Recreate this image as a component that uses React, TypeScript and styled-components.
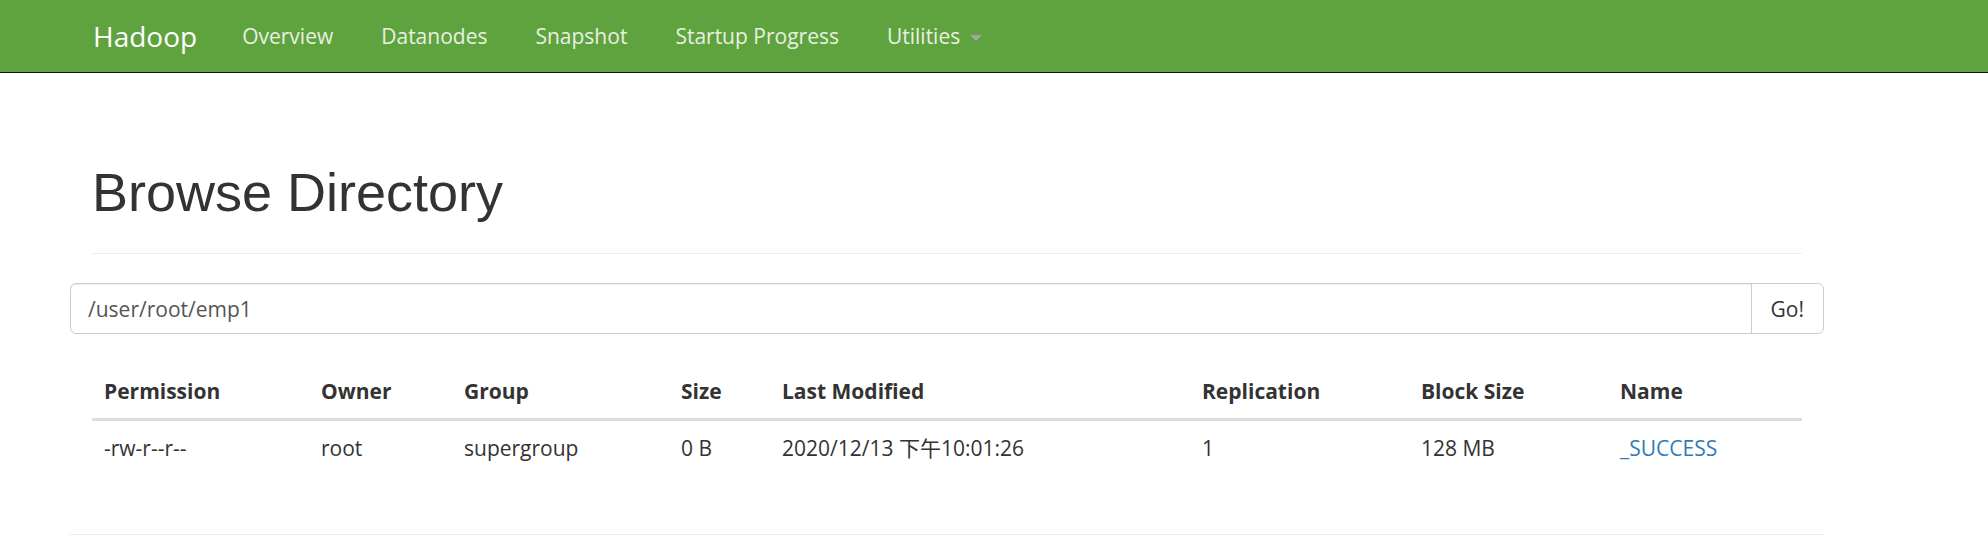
import styled, { createGlobalStyle } from 'styled-components';

const GlobalStyle = createGlobalStyle`
  html, body {
    margin: 0;
    padding: 0;
    background: #fff;
  }

  body {
    font-family: 'Open Sans', 'Noto Sans CJK SC', sans-serif;
    font-size: 21px;
    line-height: 30px;
    color: #333;
  }
`;

interface FileRow {
  permission: string;
  owner: string;
  group: string;
  size: string;
  modified: string;
  replication: string;
  blockSize: string;
  name: string;
}

const columns = [
  { label: 'Permission', width: 217 },
  { label: 'Owner', width: 143 },
  { label: 'Group', width: 217 },
  { label: 'Size', width: 101 },
  { label: 'Last Modified', width: 420 },
  { label: 'Replication', width: 219 },
  { label: 'Block Size', width: 199 },
  { label: 'Name', width: 194 },
];

const files: FileRow[] = [
  {
    permission: '-rw-r--r--',
    owner: 'root',
    group: 'supergroup',
    size: '0 B',
    modified: '2020/12/13 下午10:01:26',
    replication: '1',
    blockSize: '128 MB',
    name: '_SUCCESS',
  },
];

const navItems = ['Overview', 'Datanodes', 'Snapshot', 'Startup Progress'];

const App = () => {
  return (
    <>
      <GlobalStyle />
      <Navbar>
        <NavInner>
          <Brand>Hadoop</Brand>
          <NavList>
            {navItems.map((item) => (
              <NavLink key={item}>{item}</NavLink>
            ))}
            <NavLink>
              Utilities <Caret />
            </NavLink>
          </NavList>
        </NavInner>
      </Navbar>

      <Container>
        <PageHeader>
          <h1>Browse Directory</h1>
        </PageHeader>

        <Row>
          <InputGroup>
            <PathInput defaultValue="/user/root/emp1" />
            <GoButton>Go!</GoButton>
          </InputGroup>
        </Row>

        <Table>
          <colgroup>
            {columns.map((c) => (
              <Col key={c.label} $width={c.width} />
            ))}
          </colgroup>
          <thead>
            <tr>
              {columns.map((c) => (
                <Th key={c.label}>{c.label}</Th>
              ))}
            </tr>
          </thead>
          <tbody>
            {files.map((f) => (
              <tr key={f.name}>
                <Td>{f.permission}</Td>
                <Td>{f.owner}</Td>
                <Td>{f.group}</Td>
                <Td>{f.size}</Td>
                <Td>{f.modified}</Td>
                <Td>{f.replication}</Td>
                <Td>{f.blockSize}</Td>
                <Td>
                  <FileLink href="#">{f.name}</FileLink>
                </Td>
              </tr>
            ))}
          </tbody>
        </Table>
      </Container>

      <Footer>
        <FooterRule />
      </Footer>
    </>
  );
};

const Navbar = styled.nav`
  background-color: #5fa33e;
  border-bottom: 1px solid #111;
`;

const NavInner = styled.div`
  width: 1710px;
  margin-left: 70px;
  padding: 0 22px;
  height: 72px;
  display: flex;
  align-items: center;
`;

const Brand = styled.a`
  font-size: 28px;
  color: #fff;
  margin-left: 1px;
  padding-right: 21px;
`;

const NavList = styled.div`
  display: flex;
  align-items: center;
`;

const NavLink = styled.a`
  display: flex;
  align-items: center;
  padding: 0 24px;
  color: #e8f0e2;
  font-size: 21px;
`;

const Caret = styled.span`
  display: inline-block;
  width: 0;
  height: 0;
  margin-left: 10px;
  margin-top: 3px;
  border-top: 6px solid #a3a3a3;
  border-left: 6px solid transparent;
  border-right: 6px solid transparent;
`;

const Container = styled.div`
  width: 1710px;
  margin-left: 70px;
  padding: 0 22px;
`;

const PageHeader = styled.div`
  margin-top: 90px;
  padding-bottom: 31px;
  border-bottom: 1px solid #eee;

  h1 {
    margin: 0;
    font-family: 'Liberation Sans', Arial, sans-serif;
    font-size: 54px;
    font-weight: 400;
    line-height: 59px;
    color: #333;
  }
`;

const Row = styled.div`
  margin: 29px -22px 0;
`;

const InputGroup = styled.div`
  display: flex;
`;

const PathInput = styled.input`
  flex: 1;
  box-sizing: border-box;
  height: 51px;
  padding: 9px 17px;
  font-family: 'Open Sans', sans-serif;
  font-size: 21px;
  color: #555;
  border: 1px solid #ccc;
  border-radius: 6px 0 0 6px;
  outline: none;
  box-shadow: inset 0 1px 1px rgba(0, 0, 0, 0.075);
`;

const GoButton = styled.button`
  box-sizing: border-box;
  height: 51px;
  margin-left: -1px;
  padding: 0 19px;
  font-family: 'Open Sans', sans-serif;
  font-size: 21px;
  color: #333;
  background: #fff;
  border: 1px solid #ccc;
  border-radius: 0 6px 6px 0;
`;

const Table = styled.table`
  width: 1710px;
  margin-top: 30px;
  border-collapse: collapse;
  table-layout: fixed;
`;

const Col = styled.col<{ $width: number }>`
  width: ${(p) => p.$width}px;
`;

const Th = styled.th`
  padding: 12px;
  text-align: left;
  font-weight: 700;
  line-height: 30px;
  vertical-align: bottom;
  border-bottom: 3px solid #ddd;
`;

const Td = styled.td`
  padding: 12px;
  line-height: 30px;
  border-top: 1px solid #ddd;
  white-space: nowrap;
`;

const FileLink = styled.a`
  color: #337ab7;
  text-decoration: none;
`;

const Footer = styled.div`
  width: 1754px;
  margin-left: 70px;
  padding-top: 59px;
`;

const FooterRule = styled.hr`
  margin: 0;
  border: 0;
  border-top: 1px solid #eee;
`;

export default App;
